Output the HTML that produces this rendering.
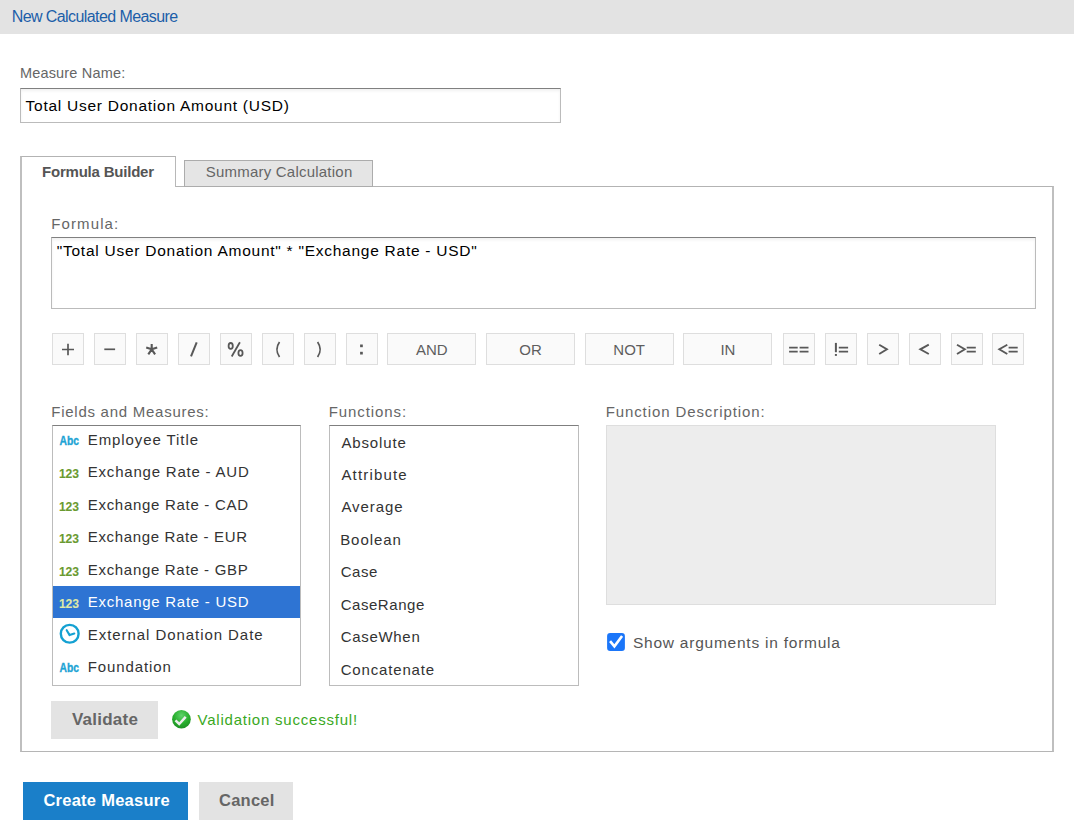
<!DOCTYPE html>
<html><head><meta charset="utf-8"><title>New Calculated Measure</title>
<style>
html,body{margin:0;padding:0;background:#fff;}
body{width:1074px;height:824px;position:relative;overflow:hidden;font-family:"Liberation Sans",sans-serif;}
.t{position:absolute;white-space:nowrap;}
.b{position:absolute;box-sizing:border-box;}
svg{position:absolute;overflow:visible;}
</style></head><body>
<div class="b" style="left:0.00px;top:0.00px;width:1074.00px;height:34.00px;background:#e3e3e3;"></div>
<div class="t" style="left:11.75px;top:7.16px;font-size:16px;line-height:19.20px;color:#1b5ea9;letter-spacing:-0.589px;">New Calculated Measure</div>
<div class="t" style="left:19.88px;top:64.58px;font-size:14.5px;line-height:17.40px;color:#666;letter-spacing:0.188px;">Measure Name:</div>
<div class="b" style="left:20.00px;top:88.00px;width:541.00px;height:35.00px;border:1px solid #bbb;border-top-color:#808080;background:#fff;box-shadow:inset 0 2px 3px rgba(0,0,0,0.06);"></div>
<div class="t" style="left:25.62px;top:97.13px;font-size:15.5px;line-height:18.60px;color:#000;letter-spacing:0.738px;">Total User Donation Amount (USD)</div>
<div class="b" style="left:20.00px;top:186.00px;width:1034.00px;height:566.00px;border-style:solid;border-color:#b3b3b3 #bfbfbf #b5b5b5 #bfbfbf;border-width:1px 2px 1px 2px;"></div>
<div class="b" style="left:20.00px;top:156.00px;width:156.00px;height:31.00px;border-style:solid;border-color:#b3b3b3 #b8b8b8 #fff #bfbfbf;border-width:1px 1px 0 2px;background:#fff;"></div>
<div class="t" style="left:42.00px;top:162.80px;font-size:15px;line-height:18.00px;color:#555;font-weight:bold;-webkit-text-stroke:0;letter-spacing:-0.211px;">Formula Builder</div>
<div class="b" style="left:184.00px;top:160.00px;width:189.00px;height:27.00px;border:1px solid #acacac;background:#e5e5e5;"></div>
<div class="t" style="left:205.68px;top:162.60px;font-size:15px;line-height:18.00px;color:#666;letter-spacing:0.222px;">Summary Calculation</div>
<div class="t" style="left:51.25px;top:214.80px;font-size:15px;line-height:18.00px;color:#666;letter-spacing:1.114px;">Formula:</div>
<div class="b" style="left:51.00px;top:237.00px;width:985.00px;height:72.00px;border:1px solid #bbb;border-top-color:#808080;background:#fff;box-shadow:inset 0 2px 3px rgba(0,0,0,0.06);"></div>
<div class="t" style="left:56.77px;top:241.53px;font-size:15.5px;line-height:18.60px;color:#000;letter-spacing:0.742px;">"Total User Donation Amount" * "Exchange Rate - USD"</div>
<div class="b" style="left:52.00px;top:333.00px;width:32.00px;height:32.00px;border:1px solid #dedede;background:#fafafa;"></div>
<div class="b" style="left:93.93px;top:333.00px;width:32.00px;height:32.00px;border:1px solid #dedede;background:#fafafa;"></div>
<div class="b" style="left:135.86px;top:333.00px;width:32.00px;height:32.00px;border:1px solid #dedede;background:#fafafa;"></div>
<div class="b" style="left:177.79px;top:333.00px;width:32.00px;height:32.00px;border:1px solid #dedede;background:#fafafa;"></div>
<div class="b" style="left:219.72px;top:333.00px;width:32.00px;height:32.00px;border:1px solid #dedede;background:#fafafa;"></div>
<div class="b" style="left:261.65px;top:333.00px;width:32.00px;height:32.00px;border:1px solid #dedede;background:#fafafa;"></div>
<div class="b" style="left:303.58px;top:333.00px;width:32.00px;height:32.00px;border:1px solid #dedede;background:#fafafa;"></div>
<div class="b" style="left:345.51px;top:333.00px;width:32.00px;height:32.00px;border:1px solid #dedede;background:#fafafa;"></div>
<div class="b" style="left:387.30px;top:333.00px;width:89.00px;height:32.00px;border:1px solid #dedede;background:#fafafa;"></div>
<div class="b" style="left:486.00px;top:333.00px;width:89.00px;height:32.00px;border:1px solid #dedede;background:#fafafa;"></div>
<div class="b" style="left:584.70px;top:333.00px;width:89.00px;height:32.00px;border:1px solid #dedede;background:#fafafa;"></div>
<div class="b" style="left:683.40px;top:333.00px;width:89.00px;height:32.00px;border:1px solid #dedede;background:#fafafa;"></div>
<div class="b" style="left:783.40px;top:333.00px;width:32.00px;height:32.00px;border:1px solid #dedede;background:#fafafa;"></div>
<div class="b" style="left:825.20px;top:333.00px;width:32.00px;height:32.00px;border:1px solid #dedede;background:#fafafa;"></div>
<div class="b" style="left:867.00px;top:333.00px;width:32.00px;height:32.00px;border:1px solid #dedede;background:#fafafa;"></div>
<div class="b" style="left:908.80px;top:333.00px;width:32.00px;height:32.00px;border:1px solid #dedede;background:#fafafa;"></div>
<div class="b" style="left:950.60px;top:333.00px;width:32.00px;height:32.00px;border:1px solid #dedede;background:#fafafa;"></div>
<div class="b" style="left:992.40px;top:333.00px;width:32.00px;height:32.00px;border:1px solid #dedede;background:#fafafa;"></div>
<svg style="left:0;top:0" width="1074" height="400" viewBox="0 0 1074 400"><path d="M62,349.5H74M68,343.7V355.3" fill="none" stroke="#585858" stroke-width="1.7"/><path d="M104.3,349.3H115.1" fill="none" stroke="#585858" stroke-width="1.7"/><path d="M151.7,349.3V344M151.7,349.3L157.2,347.5M151.7,349.3L155.1,354.3M151.7,349.3L148.3,354.3M151.7,349.3L146.2,347.5" fill="none" stroke="#585858" stroke-width="2.1"/><path d="M196.7,342.3L191,356.4" fill="none" stroke="#585858" stroke-width="2"/><ellipse cx="230.7" cy="345.9" rx="2.1" ry="2.9" fill="none" stroke="#585858" stroke-width="1.8"/><ellipse cx="240.5" cy="353" rx="2.1" ry="2.9" fill="none" stroke="#585858" stroke-width="1.8"/><path d="M239.9,342.2L231.7,356.5" fill="none" stroke="#585858" stroke-width="1.8"/><path d="M279.5,342Q274.3,349.5 279.5,357" fill="none" stroke="#585858" stroke-width="1.7"/><path d="M317.6,342Q322.8,349.5 317.6,357" fill="none" stroke="#585858" stroke-width="1.7"/><rect x="360.1" y="344.5" width="2.7" height="2.7" fill="#585858"/><rect x="360.1" y="351.8" width="2.7" height="2.7" fill="#585858"/><path d="M789.1,347.6H797.7M789.1,351.6H797.7" fill="none" stroke="#585858" stroke-width="1.8"/><path d="M799.6,347.6H808.5M799.6,351.6H808.5" fill="none" stroke="#585858" stroke-width="1.8"/><path d="M835.9,342.9V352.2" fill="none" stroke="#585858" stroke-width="2"/><rect x="834.9" y="354" width="2" height="1.9" fill="#585858"/><path d="M838.8,347.6H848.1M838.8,351.6H848.1" fill="none" stroke="#585858" stroke-width="1.8"/><path d="M879.2,344.7L886.9,349.3L879.2,354" fill="none" stroke="#585858" stroke-width="1.9"/><path d="M928.8,344.7L920.3,349.3L928.8,354" fill="none" stroke="#585858" stroke-width="1.9"/><path d="M957,344.7L964.8,349.3L957,354" fill="none" stroke="#585858" stroke-width="1.9"/><path d="M966.7,347.6H975.8M966.7,351.6H975.8" fill="none" stroke="#585858" stroke-width="1.8"/><path d="M1007.3,344.7L999.3,349.3L1007.3,354" fill="none" stroke="#585858" stroke-width="1.9"/><path d="M1008.6,347.6H1017.7M1008.6,351.6H1017.7" fill="none" stroke="#585858" stroke-width="1.8"/></svg>
<div class="t" style="left:387.30px;top:333.70px;width:89.00px;height:32.00px;line-height:32.00px;text-align:center;font-size:15px;color:#5e5e5e;">AND</div>
<div class="t" style="left:486.00px;top:333.70px;width:89.00px;height:32.00px;line-height:32.00px;text-align:center;font-size:15px;color:#5e5e5e;">OR</div>
<div class="t" style="left:584.70px;top:333.70px;width:89.00px;height:32.00px;line-height:32.00px;text-align:center;font-size:15px;color:#5e5e5e;">NOT</div>
<div class="t" style="left:683.40px;top:333.70px;width:89.00px;height:32.00px;line-height:32.00px;text-align:center;font-size:15px;color:#5e5e5e;">IN</div>
<div class="t" style="left:51.25px;top:402.60px;font-size:15px;line-height:18.00px;color:#666;letter-spacing:0.739px;">Fields and Measures:</div>
<div class="t" style="left:328.65px;top:402.80px;font-size:15px;line-height:18.00px;color:#666;letter-spacing:0.922px;">Functions:</div>
<div class="t" style="left:605.65px;top:402.80px;font-size:15px;line-height:18.00px;color:#666;letter-spacing:0.903px;">Function Description:</div>
<div class="b" style="left:52.00px;top:425.00px;width:249.00px;height:261.00px;border:1px solid #bcbcbc;border-top-color:#7f7f7f;background:#fff;"></div>
<div class="t" style="left:87.75px;top:430.80px;font-size:15px;line-height:18.00px;color:#333;letter-spacing:0.915px;">Employee Title</div>
<svg style="left:58px;top:433.00px" width="24" height="14"><text x="1.5" y="12" font-family="Liberation Sans" font-weight="bold" font-size="12.5" fill="#1ba3d4" stroke="#1ba3d4" stroke-width="0.35" textLength="19.5" lengthAdjust="spacingAndGlyphs">Abc</text></svg>
<div class="t" style="left:87.75px;top:463.26px;font-size:15px;line-height:18.00px;color:#333;letter-spacing:0.792px;">Exchange Rate - AUD</div>
<svg style="left:57px;top:465.46px" width="24" height="14"><text x="1.9" y="12.8" font-family="Liberation Sans" font-weight="bold" font-size="13.6" fill="#6a9a30" stroke="#6a9a30" stroke-width="0.1" textLength="20.2" lengthAdjust="spacingAndGlyphs">123</text></svg>
<div class="t" style="left:87.75px;top:495.72px;font-size:15px;line-height:18.00px;color:#333;letter-spacing:0.704px;">Exchange Rate - CAD</div>
<svg style="left:57px;top:497.92px" width="24" height="14"><text x="1.9" y="12.8" font-family="Liberation Sans" font-weight="bold" font-size="13.6" fill="#6a9a30" stroke="#6a9a30" stroke-width="0.1" textLength="20.2" lengthAdjust="spacingAndGlyphs">123</text></svg>
<div class="t" style="left:87.75px;top:528.18px;font-size:15px;line-height:18.00px;color:#333;letter-spacing:0.649px;">Exchange Rate - EUR</div>
<svg style="left:57px;top:530.38px" width="24" height="14"><text x="1.9" y="12.8" font-family="Liberation Sans" font-weight="bold" font-size="13.6" fill="#6a9a30" stroke="#6a9a30" stroke-width="0.1" textLength="20.2" lengthAdjust="spacingAndGlyphs">123</text></svg>
<div class="t" style="left:87.75px;top:560.64px;font-size:15px;line-height:18.00px;color:#333;letter-spacing:0.688px;">Exchange Rate - GBP</div>
<svg style="left:57px;top:562.84px" width="24" height="14"><text x="1.9" y="12.8" font-family="Liberation Sans" font-weight="bold" font-size="13.6" fill="#6a9a30" stroke="#6a9a30" stroke-width="0.1" textLength="20.2" lengthAdjust="spacingAndGlyphs">123</text></svg>
<div class="b" style="left:53.00px;top:586.00px;width:247.00px;height:32.00px;background:#2e74d3;"></div>
<div class="t" style="left:87.75px;top:593.10px;font-size:15px;line-height:18.00px;color:#fff;letter-spacing:0.738px;">Exchange Rate - USD</div>
<svg style="left:57px;top:595.30px" width="24" height="14"><text x="1.9" y="12.8" font-family="Liberation Sans" font-weight="bold" font-size="13.6" fill="#dfe8a6" stroke="#dfe8a6" stroke-width="0.1" textLength="20.2" lengthAdjust="spacingAndGlyphs">123</text></svg>
<div class="t" style="left:87.75px;top:625.56px;font-size:15px;line-height:18.00px;color:#333;letter-spacing:0.940px;">External Donation Date</div>
<svg style="left:58px;top:622px" width="24" height="24" viewBox="58 622 24 24"><circle cx="69.7" cy="633.75" r="8.9" fill="none" stroke="#14a1d2" stroke-width="2.4"/><polyline points="66.7,630.2 69.6,635.1 74.3,633.6" fill="none" stroke="#14a1d2" stroke-width="2.1" stroke-linecap="round" stroke-linejoin="round"/></svg>
<div class="t" style="left:87.75px;top:658.02px;font-size:15px;line-height:18.00px;color:#333;letter-spacing:0.881px;">Foundation</div>
<svg style="left:58px;top:660.22px" width="24" height="14"><text x="1.5" y="12" font-family="Liberation Sans" font-weight="bold" font-size="12.5" fill="#1ba3d4" stroke="#1ba3d4" stroke-width="0.35" textLength="19.5" lengthAdjust="spacingAndGlyphs">Abc</text></svg>
<div class="b" style="left:329.00px;top:425.00px;width:250.00px;height:261.00px;border:1px solid #bcbcbc;border-top-color:#7f7f7f;background:#fff;"></div>
<div class="t" style="left:341.40px;top:433.50px;font-size:15px;line-height:18.00px;color:#333;letter-spacing:0.864px;">Absolute</div>
<div class="t" style="left:341.40px;top:465.97px;font-size:15px;line-height:18.00px;color:#333;letter-spacing:1.169px;">Attribute</div>
<div class="t" style="left:341.40px;top:498.44px;font-size:15px;line-height:18.00px;color:#333;letter-spacing:0.917px;">Average</div>
<div class="t" style="left:340.15px;top:530.91px;font-size:15px;line-height:18.00px;color:#333;letter-spacing:0.954px;">Boolean</div>
<div class="t" style="left:340.65px;top:563.38px;font-size:15px;line-height:18.00px;color:#333;letter-spacing:0.558px;">Case</div>
<div class="t" style="left:340.65px;top:595.85px;font-size:15px;line-height:18.00px;color:#333;letter-spacing:0.553px;">CaseRange</div>
<div class="t" style="left:340.65px;top:628.32px;font-size:15px;line-height:18.00px;color:#333;letter-spacing:0.700px;">CaseWhen</div>
<div class="t" style="left:340.65px;top:660.79px;font-size:15px;line-height:18.00px;color:#333;letter-spacing:0.845px;">Concatenate</div>
<div class="b" style="left:606.00px;top:425.00px;width:390.00px;height:180.00px;border:1px solid #dedede;background:#ededed;"></div>
<svg style="left:605px;top:631px" width="22" height="22" viewBox="605 631 22 22"><rect x="607.1" y="632.9" width="17.8" height="18" rx="3" fill="#1b76f9"/><polyline points="610.9,642.1 614.4,646.3 621.3,637" fill="none" stroke="#fff" stroke-width="2.6" stroke-linecap="square" stroke-linejoin="miter"/></svg>
<div class="t" style="left:632.95px;top:633.93px;font-size:15.5px;line-height:18.60px;color:#555;letter-spacing:0.764px;">Show arguments in formula</div>
<div class="b" style="left:51.00px;top:701.00px;width:107.00px;height:38.00px;background:#e3e3e3;"></div>
<div class="t" style="left:71.88px;top:709.71px;font-size:17px;line-height:20.40px;color:#666;font-weight:bold;-webkit-text-stroke:0;letter-spacing:0.243px;">Validate</div>
<svg style="left:170px;top:708px" width="24" height="24" viewBox="170 708 24 24"><defs><radialGradient id="g" cx="50%" cy="30%" r="70%"><stop offset="0" stop-color="#5fd36a"/><stop offset="0.6" stop-color="#27ae2c"/><stop offset="1" stop-color="#1e8f25"/></radialGradient></defs><circle cx="181.45" cy="719.25" r="9.35" fill="url(#g)"/><polyline points="175.5,720.3 179.2,724 185.7,716.9" fill="none" stroke="#eee" stroke-width="2.5"/></svg>
<div class="t" style="left:197.47px;top:710.60px;font-size:15px;line-height:18.00px;color:#3aa81e;letter-spacing:0.788px;">Validation successful!</div>
<div class="b" style="left:23.00px;top:782.00px;width:165.00px;height:38.00px;background:#1a7fc9;"></div>
<div class="t" style="left:43.38px;top:790.68px;font-size:16.5px;line-height:19.80px;color:#fff;font-weight:bold;-webkit-text-stroke:0;letter-spacing:0.258px;">Create Measure</div>
<div class="b" style="left:199.00px;top:782.00px;width:94.00px;height:38.00px;background:#e3e3e3;"></div>
<div class="t" style="left:218.97px;top:790.68px;font-size:16.5px;line-height:19.80px;color:#666;font-weight:bold;-webkit-text-stroke:0;letter-spacing:0.250px;">Cancel</div>
</body></html>
